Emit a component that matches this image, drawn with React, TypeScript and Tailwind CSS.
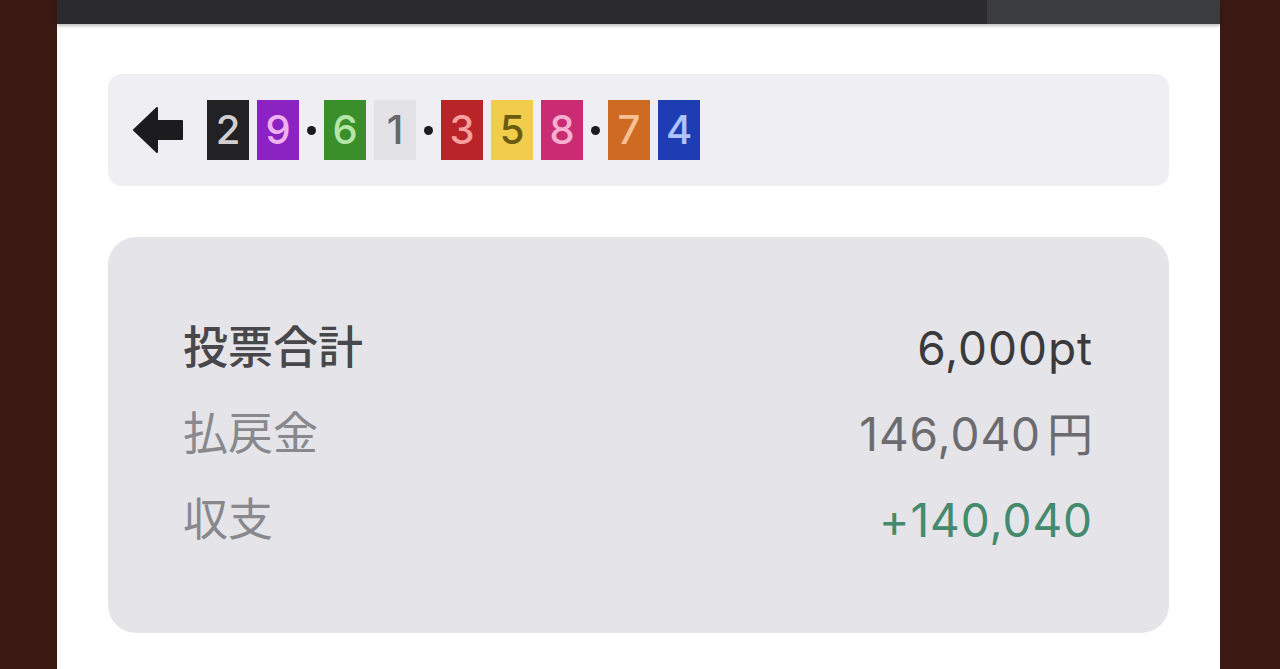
// Bet result — order ticket and payout summary
const BOXES: ({ n: string; bg: string; fg: string } | "dot")[] = [
  { n: "2", bg: "bg-[#222224]", fg: "text-[#cfcfd2]" },
  { n: "9", bg: "bg-[#8b22c2]", fg: "text-[#f0b2ee]" },
  "dot",
  { n: "6", bg: "bg-[#3b8f2b]", fg: "text-[#b4e6a8]" },
  { n: "1", bg: "bg-[#e3e3e7]", fg: "text-[#66666b]" },
  "dot",
  { n: "3", bg: "bg-[#b92429]", fg: "text-[#f6a0a0]" },
  { n: "5", bg: "bg-[#f1cd4c]", fg: "text-[#6a5a12]" },
  { n: "8", bg: "bg-[#c92c72]", fg: "text-[#f6b0cf]" },
  "dot",
  { n: "7", bg: "bg-[#cf6a22]", fg: "text-[#f6c196]" },
  { n: "4", bg: "bg-[#1e3db3]", fg: "text-[#aec3ff]" },
];

const ROWS = [
  { label: "投票合計", value: "6,000", unit: "pt", lc: "text-[#48484c] font-medium", vc: "text-[#3a3a3d]" },
  { label: "払戻金", value: "146,040", unit: "円", lc: "text-[#88888d]", vc: "text-[#6c6c70]" },
  { label: "収支", value: "+140,040", unit: "", lc: "text-[#88888d]", vc: "text-[#448a6c]" },
];

export default function App() {
  return (
    <div
      className="flex h-[669px] w-[1280px] overflow-hidden bg-[#3b1912]"
      style={{ fontFamily: 'Inter, "Noto Sans CJK JP", sans-serif' }}
    >
      <div className="w-[57px] shrink-0" />
      <div className="flex w-[1163px] flex-col bg-white">
        <div className="flex h-[24px] shadow-[0_2px_3px_rgba(0,0,0,0.25)]">
          <div className="flex-1 bg-[#2b2b2e]" />
          <div className="flex-1 bg-[#2b2b2e]" />
          <div className="flex-1 bg-[#2b2b2e]" />
          <div className="flex-1 bg-[#2b2b2e]" />
          <div className="flex-1 bg-[#3b3c3f]" />
        </div>

        <div className="flex flex-col px-[51px] pt-[50px]">
          <div className="flex h-[112px] items-center rounded-[14px] bg-[#efeff3] pl-[25px]">
            <svg width="50" height="48" viewBox="0 0 50 48" className="mr-[24px]">
              <path d="M1 24 L24 2 L24 15 L49 15 L49 33 L24 33 L24 46 Z" fill="#1c1c1e" strokeLinejoin="round" stroke="#1c1c1e" strokeWidth="2" />
            </svg>
            <div className="flex items-center gap-2">
              {BOXES.map((b, i) =>
                b === "dot" ? (
                  <span key={i} className="h-[9px] w-[9px] rounded-full bg-[#1c1c1e]" />
                ) : (
                  <span
                    key={i}
                    className={`flex h-[60px] w-[42px] items-center justify-center text-[40px] font-medium leading-none ${b.bg} ${b.fg}`}
                  >
                    {b.n}
                  </span>
                )
              )}
            </div>
          </div>

          <div className="mt-[51px] flex flex-col rounded-[28px] bg-[#e4e4e9] pb-[70px] pl-[75px] pr-[76px] pt-[68px]">
            {ROWS.map((r) => (
              <div key={r.label} className="flex h-[86px] items-center justify-between text-[46px]">
                <span className={`text-[45px] ${r.lc}`}>{r.label}</span>
                <span className={`tracking-[0.02em] ${r.vc}`}>
                  {r.value}
                  {r.unit === "円" ? <span className="ml-[6px] tracking-normal">{r.unit}</span> : r.unit}
                </span>
              </div>
            ))}
          </div>
        </div>
      </div>
      <div className="flex-1" />
    </div>
  );
}
